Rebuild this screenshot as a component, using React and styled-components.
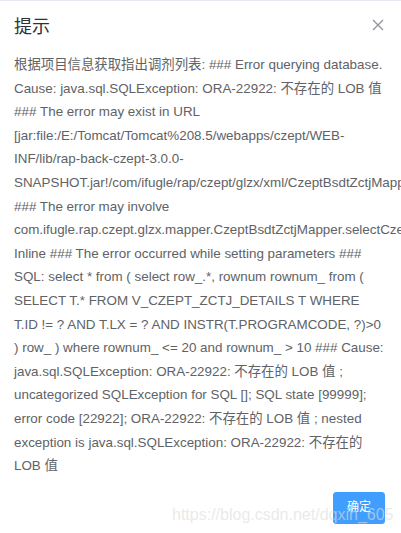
import React from "react";
import styled, { createGlobalStyle } from "styled-components";

const GlobalStyle = createGlobalStyle`
  html, body { margin: 0; padding: 0; background: #ffffff; }
  body { overflow: hidden; }
  * { box-sizing: border-box; }
`;

const Dialog = styled.div`
  position: relative;
  width: 401px;
  height: 533px;
  overflow: hidden;
  background: #ffffff;
  border-top: 1px solid #e9e9f3;
  font-family: "Liberation Sans", Arial, "Noto Sans CJK SC", sans-serif;
`;

const Header = styled.div`
  display: flex;
  align-items: flex-start;
  justify-content: space-between;
  padding: 15px 16px 10px 14px;
`;

const Title = styled.div`
  font-family: "Noto Sans CJK SC", sans-serif;
  font-size: 18px;
  line-height: 18px;
  color: #303133;
`;

const CloseButton = styled.button`
  display: flex;
  align-items: center;
  justify-content: center;
  width: 14px;
  height: 14px;
  margin-top: 2px;
  padding: 0;
  border: none;
  background: transparent;
  cursor: pointer;
`;

const Content = styled.div`
  padding: 9px 15px 0 14px;
`;

const Message = styled.p`
  margin: 0;
  width: 370px;
  font-size: 13.4px;
  line-height: 23.6px;
  color: #606266;
  word-break: normal;
  overflow-wrap: normal;
`;

const Footer = styled.div`
  display: flex;
  justify-content: flex-end;
  padding: 14px 16px 0 15px;
`;

const PrimaryButton = styled.button`
  width: 52px;
  height: 32px;
  padding: 0;
  border: 1px solid #409eff;
  border-radius: 3px;
  background: #409eff;
  color: #ffffff;
  font-family: "Noto Sans CJK SC", sans-serif;
  font-size: 12px;
  line-height: 1;
  padding-bottom: 3px;
  cursor: pointer;
`;

const Watermark = styled.div`
  position: absolute;
  left: 172px;
  top: 503px;
  font-family: "Liberation Sans", Arial, sans-serif;
  font-size: 16px;
  line-height: 22px;
  color: rgba(220, 220, 220, 0.62);
  white-space: nowrap;
  pointer-events: none;
`;

const message =
  "根据项目信息获取指出调剂列表: ### Error querying database. Cause: java.sql.SQLException: ORA-22922: 不存在的 LOB 值 ### The error may exist in URL [jar:file:/E:/Tomcat/Tomcat%208.5/webapps/czept/WEB-INF/lib/rap-back-czept-3.0.0-SNAPSHOT.jar!/com/ifugle/rap/czept/glzx/xml/CzeptBsdtZctjMapper.xml] ### The error may involve com.ifugle.rap.czept.glzx.mapper.CzeptBsdtZctjMapper.selectCzeptZctjDetails-Inline ### The error occurred while setting parameters ### SQL: select * from ( select row_.*, rownum rownum_ from ( SELECT T.* FROM V_CZEPT_ZCTJ_DETAILS T WHERE T.ID != ? AND T.LX = ? AND INSTR(T.PROGRAMCODE, ?)>0 ) row_ ) where rownum_ <= 20 and rownum_ > 10 ### Cause: java.sql.SQLException: ORA-22922: 不存在的 LOB 值 ; uncategorized SQLException for SQL []; SQL state [99999]; error code [22922]; ORA-22922: 不存在的 LOB 值 ; nested exception is java.sql.SQLException: ORA-22922: 不存在的 LOB 值";

export default function App() {
  return (
    <>
      <GlobalStyle />
      <Dialog>
        <Header>
          <Title>提示</Title>
          <CloseButton aria-label="Close">
            <svg width="12" height="12" viewBox="0 0 12 12">
              <path d="M1 1 L11 11 M11 1 L1 11" stroke="#909399" strokeWidth="1.3" fill="none" />
            </svg>
          </CloseButton>
        </Header>
        <Content>
          <Message>{message}</Message>
        </Content>
        <Footer>
          <PrimaryButton>确定</PrimaryButton>
        </Footer>
        <Watermark>https://blog.csdn.net/dqxin_605</Watermark>
      </Dialog>
    </>
  );
}
